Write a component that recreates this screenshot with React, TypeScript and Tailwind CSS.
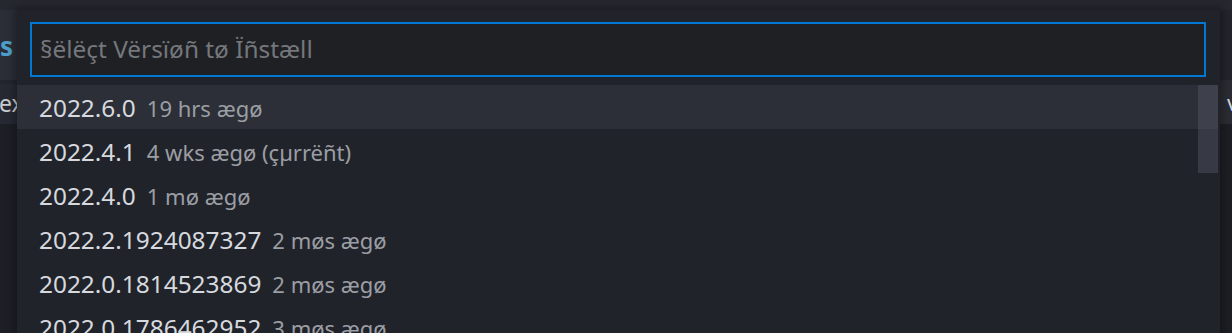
import React from "react";

type Version = { label: string; description: string };

const versions: Version[] = [
  { label: "2022.6.0", description: "19 hrs ægø" },
  { label: "2022.4.1", description: "4 wks ægø (çµrrëñt)" },
  { label: "2022.4.0", description: "1 mø ægø" },
  { label: "2022.2.1924087327", description: "2 møs ægø" },
  { label: "2022.0.1814523869", description: "2 møs ægø" },
  { label: "2022.0.1786462952", description: "3 møs ægø" },
];

const font = { fontFamily: '"Noto Sans", "Open Sans", sans-serif' };

export default function App() {
  return (
    <div
      className="relative h-[333px] w-[1232px] overflow-hidden bg-[#1e2027]"
      style={font}
    >
      {/* page behind the picker */}
      <div className="h-[10px] bg-[#26282f]" />
      <div className="flex h-[323px]">
        <div className="flex w-[17px] flex-col overflow-hidden">
          <div className="flex h-[70px] items-center bg-[#2b2e37] pt-[2px]">
            <span className="text-[26px] font-bold leading-none text-[#4d9fcb]">
              s
            </span>
          </div>
          <div className="h-[4px] bg-[#23252d]" />
          <div className="flex h-[40px] items-center bg-[#262931] pb-[2px]">
            <span className="-ml-[1px] whitespace-nowrap text-[23px] leading-none text-[#c9cbcf]">
              ex
            </span>
          </div>
          <div className="flex-1 bg-[#1d1f26]" />
        </div>
        <div className="flex-1" />
        <div className="flex w-[12px] flex-col overflow-hidden">
          <div className="h-[70px] bg-[#22242b]" />
          <div className="flex h-[44px] items-center bg-[#2a2c33] pl-[7px]">
            <span className="text-[22px] leading-none text-[#c9d6e6]">v</span>
          </div>
          <div className="flex-1 bg-[#1c1e24]" />
        </div>
      </div>

      {/* quick pick */}
      <div className="absolute left-[17px] top-[10px] h-[330px] w-[1203px] bg-[#21232b] shadow-[0_0_8px_2px_rgba(0,0,0,0.35)]">
        <div className="pl-[13px] pr-[14px] pt-[12px]">
          <div className="flex h-[55px] items-center border-2 border-[#0078d4] bg-[#1f2024] pl-[8px]">
            <span className="text-[24.4px] leading-none text-[#74777c]">
              §ëlëçt Vërsïøñ tø Ïñstæll
            </span>
          </div>
        </div>
        <div className="relative mt-[8px] mr-[2px]">
          {versions.map((v, i) => (
            <div
              key={v.label}
              className={`flex h-[44px] items-center whitespace-nowrap pl-[22px] pt-[2px] ${
                i === 0 ? "bg-[#2c2f38]" : ""
              }`}
            >
              <span className="text-[24.4px] leading-none text-[#d6d9de]">
                {v.label}
              </span>
              <span className="ml-[11px] text-[22px] leading-none text-[#9b9ea3]">
                {v.description}
              </span>
            </div>
          ))}
          <div className="absolute right-0 top-0 h-[88px] w-[20px] bg-[#5a5d6b]/40" />
        </div>
      </div>
    </div>
  );
}
